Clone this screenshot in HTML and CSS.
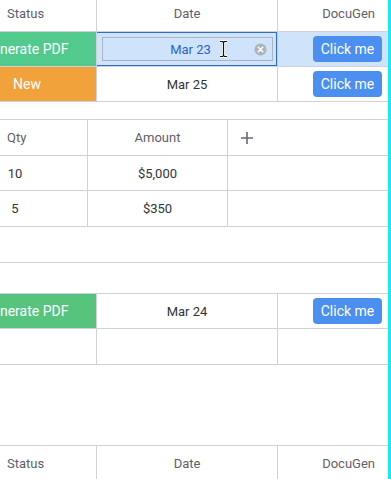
FILE: index.html
```html
<!DOCTYPE html>
<html>
<head>
<meta charset="utf-8">
<link rel="stylesheet" href="styles.css">
</head>
<body>
<div class="page">
  <div class="board">
    <div class="row head-row tall">
      <div class="cell left">Status</div>
      <div class="cell center">Date</div>
      <div class="cell right">DocuGen</div>
    </div>
    <div class="row selected">
      <div class="cell status green"><span class="label clipped">Generate PDF</span></div>
      <div class="cell date-edit">
        <div class="edit-frame">
          <div class="date-input">
            <span class="date-value">Mar 23</span>
            <svg class="ibeam" width="9" height="18" viewBox="0 0 9 18"><path d="M1 1.5h2.5l1 1 1-1H8M4.5 2.5v13M1 16.5h2.5l1-1 1 1H8" fill="none" stroke="#fff" stroke-width="3"/><path d="M1 1.5h2.5l1 1 1-1H8M4.5 2.5v13M1 16.5h2.5l1-1 1 1H8" fill="none" stroke="#111" stroke-width="1.2"/></svg>
            <svg class="clear" width="13" height="13" viewBox="0 0 13 13"><circle cx="6.5" cy="6.5" r="6" fill="#aeb2b9"/><path d="M4.3 4.3l4.4 4.4M8.7 4.3l-4.4 4.4" stroke="#fff" stroke-width="1.6" stroke-linecap="round"/></svg>
          </div>
        </div>
      </div>
      <div class="cell right"><button class="btn">Click me</button></div>
    </div>
    <div class="row">
      <div class="cell status orange"><span class="label new">New</span></div>
      <div class="cell center body">Mar 25</div>
      <div class="cell right"><button class="btn">Click me</button></div>
    </div>
  </div>

  <div class="subtable">
    <div class="srow shead">
      <div class="scell left">Qty</div>
      <div class="scell center">Amount</div>
      <div class="scell last add"><svg width="14" height="14" viewBox="0 0 14 14"><path d="M7 1v12M1 7h12" stroke="#676879" stroke-width="1.6"/></svg></div>
    </div>
    <div class="srow">
      <div class="scell left body"><span class="qty">10</span></div>
      <div class="scell center body">$5,000</div>
      <div class="scell last"></div>
    </div>
    <div class="srow tall">
      <div class="scell left body"><span class="qty">5</span></div>
      <div class="scell center body">$350</div>
      <div class="scell last"></div>
    </div>
  </div>

  <div class="blank-row"></div>

  <div class="board">
    <div class="row">
      <div class="cell status green2"><span class="label clipped">Generate PDF</span></div>
      <div class="cell center body">Mar 24</div>
      <div class="cell right"><button class="btn">Click me</button></div>
    </div>
    <div class="row tall">
      <div class="cell"></div>
      <div class="cell"></div>
      <div class="cell right"></div>
    </div>
  </div>

  <div class="board bottom">
    <div class="row head-row tall">
      <div class="cell left">Status</div>
      <div class="cell center">Date</div>
      <div class="cell right">DocuGen</div>
    </div>
  </div>
</div>
</body>
</html>
```

FILE: styles.css
```css
html, body {
  margin: 0;
  padding: 0;
  background: #fff;
  overflow: hidden;
}
body {
  font-family: Roboto, "Liberation Sans", sans-serif;
  font-size: 13px;
  color: #323338;
}
.page {
  margin-top: -4px;
  width: 388px;
  min-height: 490px;
  border-right: 3px solid #1fe4f6;
}
.board .row {
  display: grid;
  grid-template-columns: 97px 181px 1fr;
  height: 35px;
  box-sizing: border-box;
  border-bottom: 1px solid #d0d0dc;
}
.board .row.tall {
  height: 36px;
}
.cell {
  box-sizing: border-box;
  border-right: 1px solid #d0d0dc;
  display: flex;
  align-items: center;
  overflow: hidden;
  color: #5f6068;
}
.cell:last-child {
  border-right: none;
}
.cell.left {
  padding-left: 7px;
}
.cell.center {
  justify-content: center;
}
.cell.right {
  justify-content: flex-end;
  padding-right: 13px;
}
.cell.body {
  color: #323338;
}
.row.selected {
  background: #cfe3fb;
}
.status {
  color: #fff;
  font-size: 14px;
  white-space: nowrap;
}
.green {
  background: #52c98d;
}
.green2 {
  background: #56c47c;
}
.orange {
  background: #f1a23a;
}
.label.clipped {
  margin-left: -17px;
}
.label.new {
  margin-left: 13px;
}
.date-edit {
  position: relative;
}
.edit-frame {
  position: absolute;
  left: -1px;
  top: 0;
  right: 0;
  bottom: 0;
  border: 1px solid #2e6bd0;
  box-sizing: border-box;
  padding: 4px 3px 4px 5px;
  display: flex;
}
.date-input {
  position: relative;
  flex: 1;
  border: 1px solid #a8b3c3;
  display: flex;
  align-items: center;
  justify-content: center;
  padding-left: 6px;
  color: #2b63c7;
  font-size: 13px;
}
.ibeam {
  position: absolute;
  left: 116px;
  top: 2px;
}
.clear {
  position: absolute;
  right: 5px;
  top: 5px;
}
.btn {
  font-family: Roboto, "Liberation Sans", sans-serif;
  font-size: 14px;
  color: #fff;
  background: #4b8ff0;
  border: none;
  border-radius: 4px;
  width: 69px;
  height: 26px;
  padding: 0;
  margin-right: -7px;
}
.subtable {
  margin-top: 17px;
  border-top: 1px solid #d0d0dc;
}
.srow {
  display: grid;
  grid-template-columns: 88px 140px 1fr;
  height: 35px;
  box-sizing: border-box;
  border-bottom: 1px solid #d0d0dc;
}
.srow.shead {
  height: 36px;
}
.srow.tall {
  height: 36px;
}
.scell {
  box-sizing: border-box;
  border-right: 1px solid #d0d0dc;
  display: flex;
  align-items: center;
  color: #5f6068;
}
.scell.last {
  border-right: none;
}
.scell.left {
  padding-left: 7px;
}
.scell.center {
  justify-content: center;
}
.scell.body {
  color: #323338;
}
.scell.add {
  padding-left: 12px;
}
.qty {
  display: inline-block;
  width: 16px;
  text-align: center;
}
.blank-row {
  margin-top: 35px;
  height: 32px;
  box-sizing: border-box;
  border-top: 1px solid #d0d0dc;
  border-bottom: 1px solid #d0d0dc;
}
.board.bottom {
  margin-top: 80px;
  border-top: 1px solid #d0d0dc;
}
```
